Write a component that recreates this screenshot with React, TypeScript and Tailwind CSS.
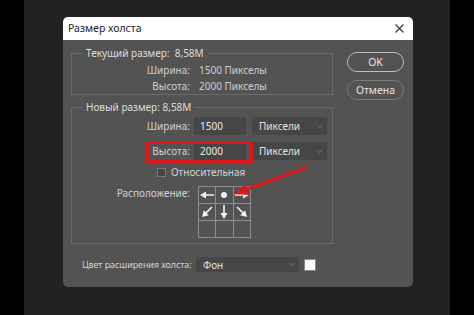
import React from "react";
import { ChevronDown } from "lucide-react";

const font = { fontFamily: '"Noto Sans", "DejaVu Sans", sans-serif' };

function Select({ label, w }: { label: string; w: string }) {
  return (
    <div className={`flex h-full items-center justify-between bg-[#464646] pl-[7px] pr-[3px] text-[#e2e2e2] ${w}`}>
      <span>{label}</span>
      <ChevronDown size={9} strokeWidth={1.5} className="text-[#9a9a9a]" />
    </div>
  );
}

// one arrow for the anchor grid, drawn pointing right then rotated
function Arrow({ rot }: { rot: number }) {
  return (
    <svg width="16" height="16" viewBox="0 0 16 16" style={{ transform: `rotate(${rot}deg)` }}>
      <line x1="1" y1="8" x2="10" y2="8" stroke="#f2f2f2" strokeWidth="1.6" />
      <polygon points="15,8 9,4.5 9,11.5" fill="#f2f2f2" />
    </svg>
  );
}

function AnchorGrid() {
  const cells = [
    <Arrow rot={180} />,
    <span className="h-[6px] w-[6px] rounded-full bg-[#f2f2f2]" />,
    <Arrow rot={0} />,
    <Arrow rot={135} />,
    <Arrow rot={90} />,
    <Arrow rot={45} />,
    null,
    null,
    null,
  ];
  return (
    <div className="grid h-[52px] w-[53px] grid-cols-3 grid-rows-3 gap-px border border-[#8e8e8e] bg-[#8e8e8e]">
      {cells.map((c, i) => (
        <div key={i} className="flex items-center justify-center bg-[#535353]">
          {c}
        </div>
      ))}
    </div>
  );
}

export default function App() {
  return (
    <div className="relative flex h-[315px] w-[474px] bg-black text-[10px] leading-none" style={font}>
      <div className="ml-[24px] h-full w-[426px] bg-[#222222]">
        {/* Dialog */}
        <div className="relative ml-[39px] mt-[17px] flex h-[270px] w-[350px] flex-col overflow-hidden rounded-[5px] bg-[#535353]">
          {/* Title bar */}
          <div className="flex h-[23px] shrink-0 items-center justify-between bg-white pl-[5px] pr-[9px] text-[#1e1e1e]">
            <span className="text-[10.5px]">Размер холста</span>
            <svg width="9" height="9" viewBox="0 0 9 9">
              <path d="M0.5 0.5 L8.5 8.5 M8.5 0.5 L0.5 8.5" stroke="#333" strokeWidth="1.1" />
            </svg>
          </div>

          <div className="flex">
            {/* left column */}
            <div className="ml-[8px] flex w-[262px] flex-col">
              <fieldset className="mt-[6px] border border-[#6a6a6a] pb-0 pl-[10px]">
                <legend className="h-[14px] px-[4px] leading-[14px] text-[#dcdcdc]">Текущий размер:&nbsp;&nbsp;8,58M</legend>
                <div className="pt-[2px] text-[#cfcfcf]">
                  <div className="flex h-[16px] items-center">
                    <span className="w-[108px] text-right">Ширина:</span>
                    <span className="ml-[9px]">1500 Пикселы</span>
                  </div>
                  <div className="flex h-[16px] items-center">
                    <span className="w-[108px] text-right">Высота:</span>
                    <span className="ml-[9px]">2000 Пикселы</span>
                  </div>
                </div>
              </fieldset>

              <fieldset className="mt-[5px] border border-[#6a6a6a] pb-[5px] pl-[10px]">
                <legend className="h-[14px] px-[4px] leading-[14px] text-[#dcdcdc]">Новый размер: 8,58M</legend>
                <div className="pt-[3px] text-[#d2d2d2]">
                  <div className="flex h-[18px] items-center">
                    <span className="w-[108px] text-right">Ширина:</span>
                    <div className="ml-[4px] flex h-full w-[52px] items-center bg-[#464646] pl-[6px] text-[#ececec]">1500</div>
                    <div className="ml-[6px] h-full">
                      <Select label="Пиксели" w="w-[75px]" />
                    </div>
                  </div>
                  <div className="mt-[7px] flex h-[18px] items-center">
                    <span className="w-[108px] text-right">Высота:</span>
                    <div className="ml-[4px] flex h-full w-[52px] items-center bg-[#464646] pl-[6px] text-[#ececec]">2000</div>
                    <div className="ml-[6px] h-full">
                      <Select label="Пиксели" w="w-[75px]" />
                    </div>
                  </div>
                  <div className="mt-[5px] flex h-[14px] items-center">
                    <span className="ml-[75px] h-[9px] w-[9px] border border-[#777] bg-[#454545]" />
                    <span className="ml-[5px]">Относительная</span>
                  </div>
                  <div className="mt-[7px] flex items-start">
                    <span className="mt-[2px] w-[108px] text-right">Расположение:</span>
                    <div className="ml-[8px]">
                      <AnchorGrid />
                    </div>
                  </div>
                </div>
              </fieldset>
            </div>

            {/* right column: buttons */}
            <div className="ml-[14px] mt-[12px] flex w-[57px] flex-col gap-[8px] text-[#e6e6e6]">
              <button className="flex h-[20px] items-center justify-center rounded-full border-[1.5px] border-[#bdbdbd] text-[10.5px]">OK</button>
              <button className="flex h-[20px] items-center justify-center rounded-full border border-[#7a7a7a] text-[10.5px]">Отмена</button>
            </div>
          </div>

          {/* bottom row */}
          <div className="ml-[19px] mt-[13px] flex h-[15px] items-center text-[#d2d2d2]">
            <span className="w-[114px] shrink-0 whitespace-nowrap text-[9px] tracking-[-0.1px]">Цвет расширения холста:</span>
            <Select label="Фон" w="w-[103px]" />
            <span className="ml-[5px] h-[12px] w-[12px] border border-[#888] bg-white" />
          </div>

          {/* red highlight box */}
          <div className="pointer-events-none absolute left-[83px] top-[124px] h-[22px] w-[107px] border-[3px] border-[#e0161b]" />
        </div>
      </div>
      <div className="ml-auto h-full w-[24px] bg-black" />

      {/* red annotation arrow */}
      <svg className="pointer-events-none absolute left-0 top-0" width="474" height="315" viewBox="0 0 474 315">
        <line x1="306" y1="168" x2="244" y2="190" stroke="#e0161b" strokeWidth="3" strokeLinecap="round" />
        <polygon points="234,194 246,184 249,195" fill="#e0161b" />
      </svg>
    </div>
  );
}
